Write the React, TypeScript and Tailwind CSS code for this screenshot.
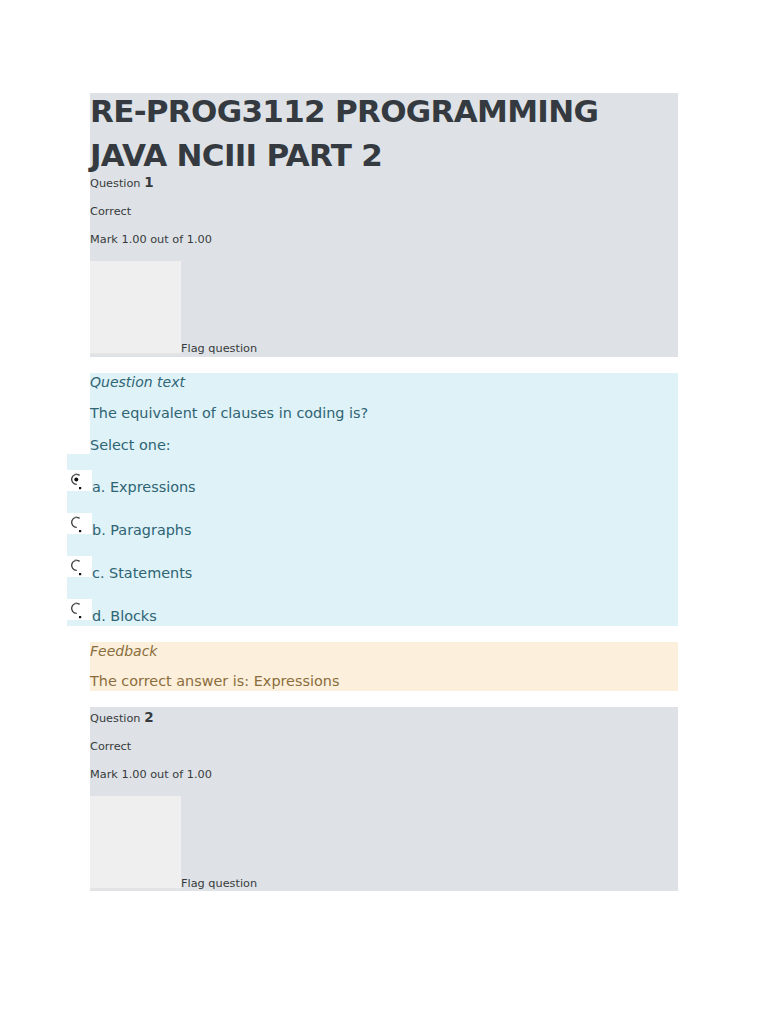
const font = { fontFamily: '"DejaVu Sans", "Liberation Sans", sans-serif' }

const RadioGlyph = ({ checked }: { checked: boolean }) => (
  <svg width="14" height="19" viewBox="0 0 14 19" className="ml-[3px] mt-[2px]">
    <path d="M9.6 3.4 A5 5 0 1 0 6.8 12.4" fill="none" stroke="#444" strokeWidth="1.4" />
    <path d="M4.4 2.2 L7 1.9" stroke="#999" strokeWidth="1" />
    {checked && <circle cx="6.3" cy="7.6" r="2" fill="#111" />}
    <rect x="9" y="15" width="2.2" height="2.2" fill="#111" />
  </svg>
)

const QuestionInfo = ({ num }: { num: number }) => (
  <>
    <p className="mb-[8px] text-[11.3px] leading-[20px] text-[#373a3c]">
      Question <span className="text-[13.5px] font-bold">{num}</span>
    </p>
    <p className="mb-[8px] text-[11.3px] leading-[20px] text-[#373a3c]">Correct</p>
    <p className="mb-[11px] text-[11.3px] leading-[20px] text-[#373a3c]">Mark 1.00 out of 1.00</p>
    <div className="flex h-[95px] items-end">
      <div className="mb-[1px] h-[94px] w-[91px] border-b-2 border-[#e4e4e4] bg-[#efefef]" />
      <span className="text-[11.3px] leading-[14px] text-[#373a3c]">Flag question</span>
    </div>
  </>
)

const options = ['a. Expressions', 'b. Paragraphs', 'c. Statements', 'd. Blocks']

export default function App() {
  return (
    <div className="min-h-[1024px] bg-white px-[90px] pt-[93px]" style={font}>
      {/* Question 1 header */}
      <div className="bg-[#dee2e6] pt-[1px] pb-[1px]">
        <h1 className="mt-[-5px] mb-[-5px] text-[31px] font-bold leading-[44px] tracking-[-0.7px] text-[#343a40]">
          RE-PROG3112 PROGRAMMING JAVA NCIII PART 2
        </h1>
        <QuestionInfo num={1} />
      </div>

      {/* Question text */}
      <div className="mt-[16px] bg-[#def2f8] text-[#2f6473]">
        <p className="text-[14px] italic leading-[18px]">Question text</p>
        <p className="mt-[12px] text-[14.4px] leading-[20px]">The equivalent of clauses in coding is?</p>
        <p className="mt-[13px] text-[14.4px] leading-[18px]">Select one:</p>
        <div className="ml-[-23px] bg-[#def2f8]">
          {options.map((opt, idx) => (
            <div key={opt} className="flex h-[43px] items-end">
              <div className="mb-[6px] h-[21px] w-[25px] bg-white">
                <RadioGlyph checked={idx === 0} />
              </div>
              <span className="text-[14.4px] leading-[20px]">{opt}</span>
            </div>
          ))}
        </div>
      </div>

      {/* Feedback */}
      <div className="mt-[16px] bg-[#fcefdc] text-[#8a6d3b]">
        <p className="text-[14px] italic leading-[18px]">Feedback</p>
        <p className="mt-[11px] text-[14.4px] leading-[20px]">The correct answer is: Expressions</p>
      </div>

      {/* Question 2 header */}
      <div className="mt-[16px] bg-[#dee2e6]">
        <QuestionInfo num={2} />
      </div>
    </div>
  )
}
